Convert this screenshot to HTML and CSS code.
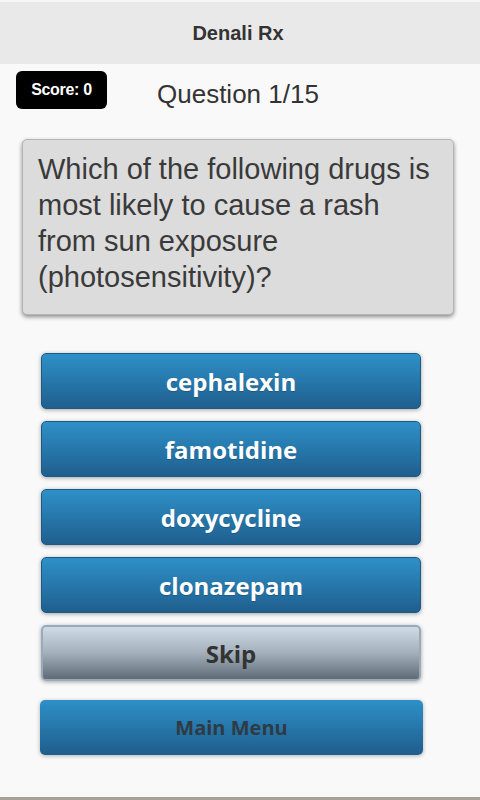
FILE: index.html
```html
<!DOCTYPE html>
<html>
<head>
<meta charset="utf-8">
<link rel="stylesheet" href="styles.css">
</head>
<body>
<div class="page">
  <header class="header"><h1 class="title">Denali Rx</h1></header>
  <div class="info">
    <div class="score">Score: 0</div>
    <div class="counter">Question 1/15</div>
  </div>
  <div class="question">Which of the following drugs is most likely to cause a rash from sun exposure (photosensitivity)?</div>
  <div class="answers">
    <button class="btn answer">cephalexin</button>
    <button class="btn answer">famotidine</button>
    <button class="btn answer">doxycycline</button>
    <button class="btn answer">clonazepam</button>
    <button class="btn skip">Skip</button>
  </div>
  <button class="btn menu">Main Menu</button>
</div>
</body>
</html>
```
FILE: styles.css
```css
* { box-sizing: border-box; }
html, body { margin: 0; padding: 0; }
body {
  background: #f9f9f9;
  font-family: "Liberation Sans", Arial, sans-serif;
  color: #333;
}
.page {
  height: 800px;
  border-bottom: 3px solid #a9a294;
  display: flex;
  flex-direction: column;
}
.header {
  height: 64px;
  background: #e9e9e9;
  border-top: 2px solid #f6f6f6;
  display: flex;
  align-items: center;
  justify-content: center;
  padding-right: 4px;
}
.title {
  margin: 0;
  font-size: 20px;
  font-weight: bold;
  color: #333;
}
.info {
  display: flex;
  align-items: flex-start;
  margin-top: 7px;
  padding-left: 16px;
}
.score {
  width: 91px;
  height: 38px;
  background: #000;
  color: #fff;
  border-radius: 6px;
  font-weight: bold;
  font-size: 16px;
  letter-spacing: -0.3px;
  display: flex;
  align-items: center;
  justify-content: center;
}
.counter {
  margin-left: 50px;
  margin-top: 9px;
  font-size: 26px;
  line-height: 28px;
  color: #333;
}
.question {
  margin: 30px 0 0 22px;
  width: 432px;
  height: 176px;
  background: #dcdcdc;
  border: 1px solid #b5b5b5;
  border-radius: 5px;
  box-shadow: 0 2px 4px rgba(0,0,0,0.45);
  padding: 11px 14px 0 15px;
  font-size: 29px;
  line-height: 36px;
  color: #3a3a3a;
}
.answers {
  margin: 38px 0 0 41px;
  display: flex;
  flex-direction: column;
  gap: 12px;
}
.btn {
  display: flex;
  align-items: center;
  justify-content: center;
  font-family: "Open Sans", sans-serif;
  font-weight: 700;
  border-radius: 5px;
  padding: 0;
  cursor: pointer;
}
.answer {
  width: 380px;
  height: 56px;
  font-size: 24px;
  color: #fff;
  background: linear-gradient(#2e90c8, #1f5f8e);
  border: 1px solid #1e5a86;
  text-shadow: 0 1px 0 #1d5a85;
  box-shadow: 0 1px 4px rgba(0,0,0,0.35);
}
.skip {
  width: 380px;
  height: 56px;
  font-size: 24px;
  color: #333;
  background: linear-gradient(#cfdbe6, #a3b0bb 50%, #5f6c78);
  border: 2px solid #9aaab8;
  box-shadow: 0 1px 4px rgba(0,0,0,0.35);
}
.menu {
  margin: 19px 0 0 40px;
  width: 383px;
  height: 55px;
  font-size: 20px;
  font-weight: 700;
  color: #2f3a44;
  background: linear-gradient(#2e90c8, #1f5d8c);
  border: none;
  box-shadow: 0 1px 4px rgba(0,0,0,0.3);
}
```
